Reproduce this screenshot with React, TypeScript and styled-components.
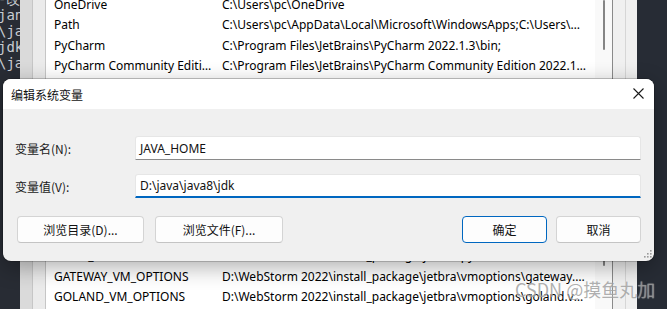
import React from 'react';
import styled, { createGlobalStyle } from 'styled-components';

const GlobalStyle = createGlobalStyle`
  html, body {
    margin: 0;
    padding: 0;
    background: #272c35;
    overflow: hidden;
  }
  body {
    font-family: "Noto Sans", "Noto Sans CJK SC", sans-serif;
    font-size: 12px;
    color: #000;
  }
`;

const topRows = [
  { name: 'OneDrive', value: 'C:\\Users\\pc\\OneDrive' },
  { name: 'Path', value: 'C:\\Users\\pc\\AppData\\Local\\Microsoft\\WindowsApps;C:\\Users\\pc\\AppData' },
  { name: 'PyCharm', value: 'C:\\Program Files\\JetBrains\\PyCharm 2022.1.3\\bin;' },
  { name: 'PyCharm Community Edition', value: 'C:\\Program Files\\JetBrains\\PyCharm Community Edition 2022.1.3\\bin;' },
];

const bottomRows = [
  { name: 'DriverData', value: 'C:\\Windows\\System32\\Drivers\\DriverData' },
  { name: 'FLASK_ENV', value: 'D:\\WebStorm 2022\\install_package\\jetbra\\py' },
  { name: 'GATEWAY_VM_OPTIONS', value: 'D:\\WebStorm 2022\\install_package\\jetbra\\vmoptions\\gateway.vmoptions' },
  { name: 'GOLAND_VM_OPTIONS', value: 'D:\\WebStorm 2022\\install_package\\jetbra\\vmoptions\\goland.vmoptions' },
];

const terminalLines = ['-改', 'jant', '\\jav', 'jdk1', '\\jav'];

const Screen = styled.div`
  position: relative;
  width: 667px;
  height: 309px;
  display: flex;
  overflow: hidden;
`;

const Terminal = styled.div`
  width: 20px;
  flex: none;
  background: #282c34;
  color: #c9ccd2;
  font-family: "DejaVu Sans Mono", monospace;
  font-size: 14px;
  line-height: 16px;
  overflow: hidden;
  white-space: nowrap;
`;

const TermLines = styled.div`
  margin: -9px 0 0 -2px;
`;

const ParentWindow = styled.div`
  width: 617px;
  flex: none;
  display: flex;
  background: #f0f0f0;
`;

const Gutter = styled.div<{ $shade: 'dark' | 'light' }>`
  width: 12px;
  flex: none;
  background: ${p => (p.$shade === 'dark' ? '#dadada' : '#ebebeb')};
  border-right: 1px solid #c6c6c6;
`;

const ListsColumn = styled.div`
  width: 566px;
  flex: none;
  display: flex;
  flex-direction: column;
  justify-content: space-between;
  border-right: 1px solid #8a8a8a;
`;

const ListBox = styled.div<{ $height: number }>`
  height: ${p => p.$height}px;
  display: flex;
  background: #fff;
  overflow: hidden;
`;

const Rows = styled.div<{ $offset: number }>`
  flex: 1;
  min-width: 0;
  margin-top: ${p => p.$offset}px;
`;

const Row = styled.div`
  display: grid;
  grid-template-columns: 168px 1fr;
  height: 20.5px;
  align-items: center;
  padding-left: 8px;
  white-space: nowrap;
`;

const Cell = styled.span`
  overflow: hidden;
  text-overflow: ellipsis;
  padding-right: 8px;
`;

const ScrollTrack = styled.div`
  width: 17px;
  flex: none;
  background: #f9f9f9;
  display: flex;
  justify-content: center;
`;

const Thumb = styled.div<{ $top: number; $height: number }>`
  width: 2px;
  margin-top: ${p => p.$top}px;
  height: ${p => p.$height}px;
  background: #858585;
  border-radius: 1px;
`;

const WindowEdge = styled.div`
  width: 12px;
  flex: none;
  background: #f0f0f0;
  border-right: 1px solid #d6d6d6;
`;

const Desk = styled.div`
  flex: 1;
  background: #272c35;
`;

const Dialog = styled.div`
  position: absolute;
  left: 3px;
  top: 79px;
  width: 651px;
  height: 182px;
  border-radius: 8px;
  overflow: hidden;
  background: #f0f0f0;
  box-shadow: 0 0 0 1px rgba(0, 0, 0, 0.18), 0 6px 22px rgba(0, 0, 0, 0.32);
  display: flex;
  flex-direction: column;
  font-family: "Noto Sans CJK SC", "Noto Sans", sans-serif;
`;

const TitleBar = styled.div`
  height: 30px;
  flex: none;
  background: #fff;
  display: flex;
  align-items: center;
  justify-content: space-between;
  padding: 0 10px 0 8px;
`;

const Title = styled.span`
  font-size: 12px;
  color: #111;
`;

const CloseIcon = styled.svg`
  width: 11px;
  height: 11px;
  margin-top: -1px;
`;

const Body = styled.div`
  flex: 1;
  padding: 27px 13px 0 12px;
  display: flex;
  flex-direction: column;
`;

const FieldRow = styled.div`
  display: grid;
  grid-template-columns: 120px 1fr;
  align-items: center;
  margin-bottom: 14px;
`;

const Label = styled.label`
  font-size: 12px;
  color: #1a1a1a;
`;

const Input = styled.div<{ $focused?: boolean }>`
  height: 24px;
  box-sizing: border-box;
  background: #fff;
  border: 1px solid #e6e6e6;
  border-bottom: ${p => (p.$focused ? '2px solid #0067c0' : '1px solid #8a8a8a')};
  border-radius: 3px 3px 0 0;
  padding: 0 4px;
  display: flex;
  align-items: center;
  font-size: 12px;
  color: #111;
  font-family: "Noto Sans", "Noto Sans CJK SC", sans-serif;
`;

const ButtonBar = styled.div`
  display: flex;
  justify-content: space-between;
  margin-top: 4px;
  padding-left: 2px;
`;

const ButtonGroup = styled.div<{ $gap: number }>`
  display: flex;
  gap: ${p => p.$gap}px;
`;

const Button = styled.button<{ $width: number; $primary?: boolean }>`
  width: ${p => p.$width}px;
  height: 27px;
  box-sizing: border-box;
  background: #fdfdfd;
  border: 1px solid ${p => (p.$primary ? '#0067c0' : '#d4d4d4')};
  border-bottom-color: ${p => (p.$primary ? '#0067c0' : '#c4c4c4')};
  border-radius: 4px;
  font-family: "Noto Sans CJK SC", "Noto Sans", sans-serif;
  font-size: 12px;
  color: #111;
  padding: 0;
`;

const Grip = styled.svg`
  position: absolute;
  right: 2px;
  bottom: 3px;
  width: 9px;
  height: 9px;
`;

const Watermark = styled.div`
  position: absolute;
  left: 515px;
  top: 277px;
  font-family: "Noto Sans CJK SC", sans-serif;
  font-size: 18px;
  line-height: 24px;
  color: rgba(140, 140, 140, 0.7);
  text-shadow: 0 0 1px rgba(255, 255, 255, 0.6);
  white-space: nowrap;
`;

export default function App() {
  return (
    <>
      <GlobalStyle />
      <Screen>
        <Terminal>
          <TermLines>
            {terminalLines.map((l, i) => (
              <div key={i}>{l}</div>
            ))}
          </TermLines>
        </Terminal>
        <ParentWindow>
          <Gutter $shade="dark" />
          <Gutter $shade="light" />
          <ListsColumn>
            <ListBox $height={78}>
              <Rows $offset={-6}>
                {topRows.map(r => (
                  <Row key={r.name}>
                    <Cell>{r.name}</Cell>
                    <Cell>{r.value}</Cell>
                  </Row>
                ))}
              </Rows>
              <ScrollTrack>
                <Thumb $top={0} $height={50} />
              </ScrollTrack>
            </ListBox>
            <ListBox $height={84}>
              <Rows $offset={0}>
                {bottomRows.map(r => (
                  <Row key={r.name}>
                    <Cell>{r.name}</Cell>
                    <Cell>{r.value}</Cell>
                  </Row>
                ))}
              </Rows>
              <ScrollTrack>
                <Thumb $top={33} $height={8} />
              </ScrollTrack>
            </ListBox>
          </ListsColumn>
          <WindowEdge />
        </ParentWindow>
        <Desk />

        <Dialog>
          <TitleBar>
            <Title>编辑系统变量</Title>
            <CloseIcon viewBox="0 0 11 11">
              <path d="M0.5 0.5 L10.5 10.5 M10.5 0.5 L0.5 10.5" stroke="#1a1a1a" strokeWidth="1.1" />
            </CloseIcon>
          </TitleBar>
          <Body>
            <FieldRow>
              <Label>变量名(N):</Label>
              <Input>JAVA_HOME</Input>
            </FieldRow>
            <FieldRow>
              <Label>变量值(V):</Label>
              <Input $focused>D:\java\java8\jdk</Input>
            </FieldRow>
            <ButtonBar>
              <ButtonGroup $gap={11}>
                <Button $width={127}>浏览目录(D)...</Button>
                <Button $width={128}>浏览文件(F)...</Button>
              </ButtonGroup>
              <ButtonGroup $gap={9}>
                <Button $width={85} $primary>确定</Button>
                <Button $width={85}>取消</Button>
              </ButtonGroup>
            </ButtonBar>
          </Body>
          <Grip viewBox="0 0 9 9">
            {[[7, 1], [4, 4], [7, 4], [1, 7], [4, 7], [7, 7]].map(([x, y]) => (
              <rect key={`${x}-${y}`} x={x} y={y} width="1.6" height="1.6" fill="#9a9a9a" />
            ))}
          </Grip>
        </Dialog>

        <Watermark>CSDN @摸鱼丸加</Watermark>
      </Screen>
    </>
  );
}
